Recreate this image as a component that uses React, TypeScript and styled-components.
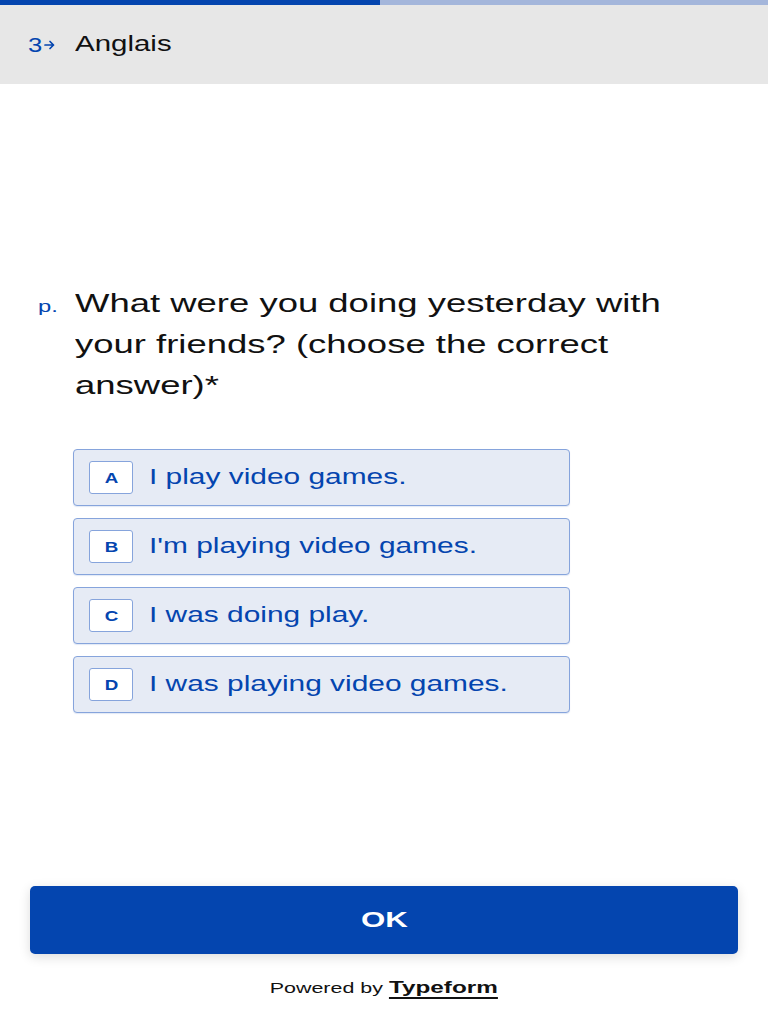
import React from "react";
import styled, { createGlobalStyle, css } from "styled-components";

const Global = createGlobalStyle`
  html, body { margin: 0; padding: 0; background: #fff; }
  body { font-family: "Liberation Sans", Arial, sans-serif; }
  * { box-sizing: border-box; }
`;

/* the reference is drawn with a wide grotesque; widen Liberation Sans to match */
const wide = (factor: number, origin = "left center") => css`
  display: inline-block;
  transform: scaleX(${factor});
  transform-origin: ${origin};
`;

const Page = styled.div`
  height: 1024px;
  display: flex;
  flex-direction: column;
`;

const Progress = styled.div`
  height: 5px;
  background: #a4b6db;
  display: flex;
`;

const ProgressFill = styled.div`
  height: 100%;
  background: #0445af;
`;

const Header = styled.header`
  height: 79px;
  background: #e7e7e7;
  display: flex;
  align-items: center;
  padding-left: 28px;
`;

const StepNum = styled.span`
  display: flex;
  align-items: center;
  width: 47px;
  gap: 4px;
  color: #0445af;
`;

const StepDigit = styled.span`
  font-size: 21px;
  ${wide(1.22)}
`;

const Title = styled.span`
  font-size: 21.5px;
  color: #111;
  ${wide(1.37)}
`;

const Main = styled.main`
  padding-top: 199px;
  flex: 1;
`;

const QuestionRow = styled.div`
  display: flex;
  align-items: baseline;
`;

const QNum = styled.span`
  width: 75px;
  padding-left: 38px;
  flex-shrink: 0;
  color: #0445af;
  font-size: 17px;
`;

const QNumInner = styled.span`
  ${wide(1.4)}
`;

const QText = styled.h1`
  margin: 0;
  max-width: 440px;
  font-weight: 400;
  font-size: 25.5px;
  line-height: 41px;
  color: #111;
  ${wide(1.43)}
`;

const Options = styled.div`
  margin: 43px 0 0 73px;
  width: 497px;
  display: flex;
  flex-direction: column;
  gap: 12px;
`;

const Option = styled.div`
  height: 57px;
  background: #e6ebf5;
  border: 1.5px solid #86a4dc;
  border-radius: 4px;
  display: flex;
  align-items: center;
  padding-left: 15px;
  box-shadow: 0 1px 1px rgba(4, 69, 175, 0.12);
`;

const Key = styled.span`
  width: 44px;
  height: 33px;
  flex-shrink: 0;
  background: #fff;
  border: 1.5px solid #86a4dc;
  border-radius: 3px;
  display: flex;
  align-items: center;
  justify-content: center;
  margin-right: 16px;
  color: #0445af;
  font-weight: 700;
  font-size: 15px;
`;

const KeyLetter = styled.span`
  ${wide(1.25, "center")}
`;

const OptText = styled.span`
  color: #0445af;
  font-size: 21.5px;
  white-space: nowrap;
  ${wide(1.39)}
`;

const Footer = styled.footer`
  padding: 0 30px 22px;
  display: flex;
  flex-direction: column;
  align-items: center;
`;

const OkButton = styled.button`
  width: 100%;
  height: 68px;
  border: none;
  border-radius: 5px;
  background: #0445af;
  color: #fff;
  font-family: "Liberation Sans", Arial, sans-serif;
  font-weight: 700;
  font-size: 22px;
  box-shadow: 0 3px 12px rgba(0, 0, 0, 0.14);
  cursor: pointer;
`;

const OkLabel = styled.span`
  ${wide(1.42, "center")}
`;

const Powered = styled.div`
  margin-top: 24px;
  height: 24px;
  display: flex;
  align-items: baseline;
  gap: 7px;
  font-size: 15px;
  color: #111;
  ${wide(1.43, "center")}
`;

const Brand = styled.span`
  font-weight: 700;
  font-size: 17px;
  text-decoration: underline;
  text-decoration-thickness: 1.5px;
  text-underline-offset: 4px;
`;

const options = [
  ["A", "I play video games."],
  ["B", "I'm playing video games."],
  ["C", "I was doing play."],
  ["D", "I was playing video games."],
];

export default function App() {
  return (
    <Page>
      <Global />
      <Progress>
        <ProgressFill style={{ width: "49.5%" }} />
      </Progress>
      <Header>
        <StepNum>
          <StepDigit>3</StepDigit>
          <svg width="11" height="10" viewBox="0 0 11 10" fill="none" stroke="#0445af" strokeWidth="1.7" strokeLinecap="round" strokeLinejoin="round">
            <path d="M1 5h8.5M6 1.5L9.5 5 6 8.5" />
          </svg>
        </StepNum>
        <Title>Anglais</Title>
      </Header>
      <Main>
        <QuestionRow>
          <QNum>
            <QNumInner>p.</QNumInner>
          </QNum>
          <QText>What were you doing yesterday with your friends? (choose the correct answer)*</QText>
        </QuestionRow>
        <Options>
          {options.map(([k, t]) => (
            <Option key={k}>
              <Key>
                <KeyLetter>{k}</KeyLetter>
              </Key>
              <OptText>{t}</OptText>
            </Option>
          ))}
        </Options>
      </Main>
      <Footer>
        <OkButton>
          <OkLabel>OK</OkLabel>
        </OkButton>
        <Powered>
          Powered by <Brand>Typeform</Brand>
        </Powered>
      </Footer>
    </Page>
  );
}
